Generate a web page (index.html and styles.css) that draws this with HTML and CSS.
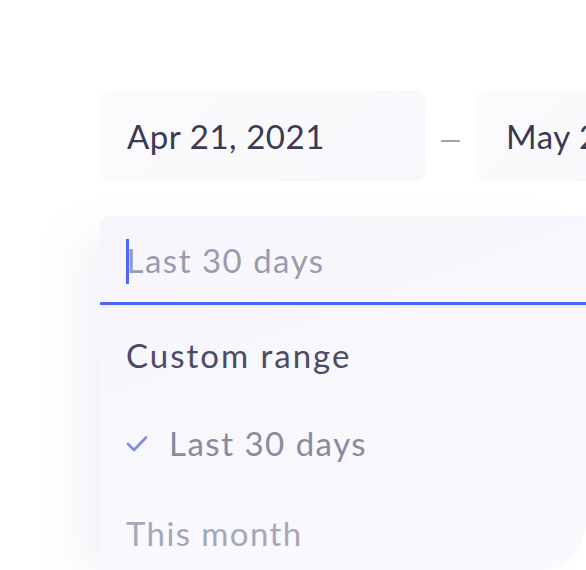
FILE: index.html
```html
<!DOCTYPE html>
<html>
<head>
<meta charset="utf-8">
<link rel="stylesheet" href="styles.css">
</head>
<body>
<div class="page">
  <div class="range">
    <div class="date-box">Apr 21, 2021</div>
    <div class="dash"></div>
    <div class="date-box second">May 21, 2021</div>
  </div>
  <div class="dropdown">
    <div class="search">
      <span class="caret"></span><span class="placeholder">Last 30 days</span>
    </div>
    <div class="sep"></div>
    <ul class="options">
      <li class="opt dark">Custom range</li>
      <li class="opt selected">
        <svg class="check" width="22" height="17" viewBox="0 0 22 17"><path d="M2 9 L8 15 L20 2.5" fill="none" stroke="#7b8cf2" stroke-width="2.6" stroke-linecap="round" stroke-linejoin="round"/></svg>
        <span>Last 30 days</span>
      </li>
      <li class="opt light">This month</li>
    </ul>
  </div>
</div>
</body>
</html>
```
FILE: styles.css
```css
html, body {
  margin: 0;
  padding: 0;
  background: #ffffff;
  overflow: hidden;
}
body {
  width: 586px;
  height: 570px;
  font-family: Lato, "Open Sans", sans-serif;
}
.page {
  padding: 91px 0 0 100px;
  width: 586px;
  height: 570px;
  box-sizing: border-box;
  overflow: hidden;
}
.range {
  display: flex;
  align-items: center;
  width: 486px;
  overflow: hidden;
}
.date-box {
  flex: 0 0 auto;
  width: 325px;
  height: 90px;
  box-sizing: border-box;
  padding-left: 27px;
  display: flex;
  align-items: center;
  background: linear-gradient(135deg, #fbfbfd 0%, #f8f8fc 100%);
  border-radius: 8px;
  color: #3a3a54;
  font-size: 33px;
  letter-spacing: 0.55px;
  white-space: nowrap;
}
.date-box.second {
  width: 200px;
  padding-left: 30px;
}
.dash {
  width: 19px;
  height: 2px;
  background: #a0a1b5;
  margin: 10px 16px 0 16px;
  flex: 0 0 auto;
}
.dropdown {
  margin-top: 35px;
  width: 486px;
  height: 356px;
  background: linear-gradient(160deg, #f5f5fb 0%, #f8f8fd 60%, #f9f9fe 100%);
  border-radius: 8px 0 50px 0;
  box-shadow: -30px 10px 40px -10px rgba(190, 190, 215, 0.18);
  overflow: hidden;
}
.search {
  height: 89px;
  box-sizing: border-box;
  padding-left: 26px;
  padding-top: 2px;
  display: flex;
  align-items: center;
  border-bottom: 3px solid #4e68f5;
}
.caret {
  width: 2.5px;
  height: 45px;
  background: #4e68f5;
  margin-top: 2px;
  position: relative;
  z-index: 1;
}
.placeholder {
  color: #9b9bae;
  font-size: 33px;
  letter-spacing: 1.5px;
  margin-left: -2px;
}
.sep {
  height: 3px;
  background: #f0f0f7;
}
.options {
  list-style: none;
  margin: 0;
  padding: 0;
}
.opt {
  height: 90px;
  box-sizing: border-box;
  padding-left: 26px;
  display: flex;
  align-items: center;
  font-size: 33px;
  letter-spacing: 1.5px;
}
.opt.dark {
  color: #4b4b64;
  padding-top: 3px;
  letter-spacing: 2px;
}
.opt.selected {
  color: #8a8a9e;
}
.check {
  margin-right: 21px;
}
.opt.light {
  color: #a7a7b8;
  letter-spacing: 1.4px;
}
```
